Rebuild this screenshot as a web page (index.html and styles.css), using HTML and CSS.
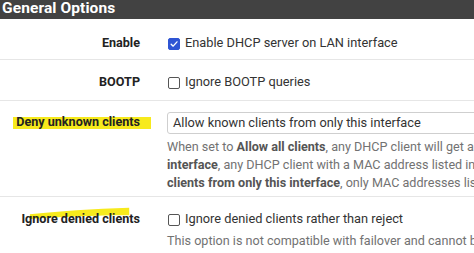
FILE: index.html
```html
<!DOCTYPE html>
<html>
<head>
<meta charset="utf-8">
<link rel="stylesheet" href="styles.css">
</head>
<body>
<div class="panel">
  <div class="heading">General Options</div>
  <div class="row first">
    <div class="label">Enable</div>
    <div class="content">
      <label class="check"><span class="box checked"><svg viewBox="0 0 12 12" width="12" height="12"><path d="M2.6 6.2 L5 8.6 L9.6 3.4" fill="none" stroke="#fff" stroke-width="1.6" stroke-linecap="round" stroke-linejoin="round"/></svg></span>Enable DHCP server on LAN interface</label>
    </div>
  </div>
  <div class="row">
    <div class="label">BOOTP</div>
    <div class="content">
      <label class="check"><span class="box"></span>Ignore BOOTP queries</label>
    </div>
  </div>
  <div class="row tall">
    <div class="label"><span class="hl hl-box"></span><span class="ltext">Deny unknown clients</span></div>
    <div class="content">
      <div class="select">Allow known clients from only this interface</div>
      <div class="help">When set to <b>Allow all clients</b>, any DHCP client will get an IP address within this scope/range on this interface. If set to <b>Allow known clients from any</b><br><b>interface</b>, any DHCP client with a MAC address listed in a static mapping on <b>any</b> scope(s)/interface(s) will get an IP address. If set to <b>Allow known</b><br><b>clients from only this interface</b>, only MAC addresses listed in static mappings on this interface will get an IP address within this scope/range.</div>
    </div>
  </div>
  <div class="row last">
    <div class="label"><svg class="hl-swipe" viewBox="0 0 110 14" width="108" height="13"><path d="M1 9 C 30 6, 70 3, 108 2 L 108 10 C 70 10, 30 12, 1 14 Z" fill="#f7ea1c"/></svg><span class="ltext">Ignore denied clients</span></div>
    <div class="content">
      <label class="check"><span class="box"></span>Ignore denied clients rather than reject</label>
      <div class="help">This option is not compatible with failover and cannot be enabled when a Failover Peer IP address is configured.</div>
    </div>
  </div>
</div>
</body>
</html>
```

FILE: styles.css
```css
html, body {
  margin: 0;
  padding: 0;
  background: #fff;
  overflow: hidden;
}
body {
  width: 474px;
  height: 253px;
  font-family: Roboto, "Liberation Sans", sans-serif;
}
.panel {
  width: 474px;
}
.heading {
  height: 19px;
  background: #424242;
  color: #fff;
  font-weight: 700;
  font-size: 15.5px;
  line-height: 17px;
  padding-left: 2px;
  letter-spacing: 0.1px;
}
.row {
  display: grid;
  grid-template-columns: 140px 1fr;
  column-gap: 27px;
  padding: 12px 0 8px;
  border-bottom: 1px solid #e6e6e6;
  white-space: nowrap;
}
.row.first {
  padding: 14px 0 6px;
}
.row.tall {
  padding: 11px 0 4px;
}
.row.last {
  border-bottom: none;
  padding-top: 12px;
}
.label {
  position: relative;
  text-align: right;
  font-weight: 700;
  font-size: 12.6px;
  line-height: 20px;
  color: #222;
}
.ltext {
  position: relative;
}
.hl-box {
  position: absolute;
  left: 13px;
  width: 138px;
  top: 5px;
  height: 12px;
  background: #f7ea1c;
}
.hl-swipe {
  position: absolute;
  left: 26px;
  top: -3px;
}
.content {
  min-width: 0;
}
.check {
  display: flex;
  align-items: center;
  font-size: 12.8px;
  line-height: 20px;
  color: #333;
}
.box {
  width: 12px;
  height: 12px;
  box-sizing: border-box;
  border: 1.5px solid #555;
  border-radius: 2px;
  margin: 1px 5px 0 1px;
  display: flex;
  align-items: center;
  justify-content: center;
  flex: none;
}
.box.checked {
  background: #2f55d4;
  border-color: #2f55d4;
}
.box svg {
  display: block;
}
.select {
  width: 320px;
  height: 22px;
  box-sizing: border-box;
  border: 1px solid #cfcfcf;
  border-radius: 3px;
  padding-left: 5px;
  font-size: 12.8px;
  line-height: 20px;
  color: #333;
}
.help {
  margin-top: 4px;
  font-size: 12.6px;
  line-height: 18px;
  color: #727272;
}
.row.last .help {
  margin-top: 3px;
}
.help b {
  font-weight: 700;
  color: #555;
}
```
